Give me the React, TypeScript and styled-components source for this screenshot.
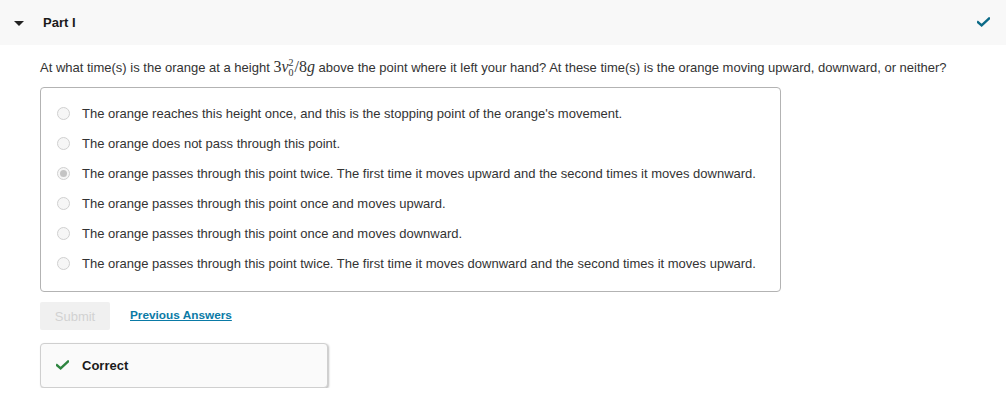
import React from 'react';
import styled, { createGlobalStyle } from 'styled-components';

const GlobalStyle = createGlobalStyle`
    body {
        margin: 0;
        background: #ffffff;
        font-family: "Liberation Sans", Arial, sans-serif;
        color: #333333;
    }
`;

const Header = styled.div`
    display: flex;
    align-items: center;
    height: 45px;
    background: #f8f8f8;
    padding: 0 16px 0 14px;
`;

const Caret = styled.span`
    width: 0;
    height: 0;
    border-left: 5px solid transparent;
    border-right: 5px solid transparent;
    border-top: 5px solid #222;
    margin-right: 19px;
    margin-top: 1px;
`;

const PartTitle = styled.span`
    flex: 1;
    font-weight: bold;
    font-size: 13px;
    color: #1a1a1a;
`;

const Body = styled.div`
    padding: 13px 40px 0;
    display: flex;
    flex-direction: column;
    align-items: flex-start;
`;

const Question = styled.p`
    margin: 0 0 11px;
    height: 18px;
    font-size: 13px;
    line-height: 18px;
    color: #333;
    white-space: nowrap;
`;

const MathSpan = styled.span`
    font-family: "Liberation Serif", "Times New Roman", serif;
    font-size: 16px;
    line-height: 0;
    white-space: nowrap;
`;

const Var = styled.i`
    font-style: italic;
`;

const SupSub = styled.span`
    display: inline-block;
    vertical-align: -4px;
    font-size: 10px;
    line-height: 10px;
    margin: 0 1px 0 0;

    & > span {
        display: block;
    }
`;

const ChoiceBox = styled.div`
    box-sizing: border-box;
    width: 741px;
    border: 1px solid #b3b3b3;
    border-radius: 4px;
    padding: 10px 0 13px 16px;
    display: flex;
    flex-direction: column;
`;

const ChoiceRow = styled.label`
    display: flex;
    align-items: center;
    height: 30px;
    font-size: 13px;
    color: #333;
`;

const Radio = styled.span<{ $checked?: boolean }>`
    box-sizing: border-box;
    width: 13px;
    height: 13px;
    border-radius: 50%;
    border: 1px solid #d0d0d0;
    background: #f6f6f6;
    margin: 0 12px 0 0;
    display: flex;
    align-items: center;
    justify-content: center;

    &::after {
        content: '';
        width: 7px;
        height: 7px;
        border-radius: 50%;
        background: ${p => (p.$checked ? '#c4c4c4' : 'transparent')};
    }
`;

const Actions = styled.div`
    display: flex;
    align-items: center;
    gap: 20px;
    margin-top: 10px;
`;

const SubmitButton = styled.button`
    width: 70px;
    height: 28px;
    border: none;
    border-radius: 2px;
    background: #f0f0f0;
    color: #d2d2d2;
    font-family: "Liberation Sans", Arial, sans-serif;
    font-size: 13px;
    padding: 0;
`;

const PrevLink = styled.a`
    font-size: 11.8px;
    font-weight: bold;
    color: #0a7aa6;
    text-decoration: underline;
    margin-top: -2px;
`;

const FeedbackBox = styled.div`
    box-sizing: border-box;
    width: 288px;
    height: 45px;
    margin-top: 13px;
    border: 1px solid #cfcfcf;
    border-radius: 4px;
    background: #fafafa;
    box-shadow: 1px 1px 2px rgba(0, 0, 0, 0.25);
    display: flex;
    align-items: center;
    padding-left: 15px;
    gap: 13px;
`;

const FeedbackText = styled.span`
    font-weight: bold;
    font-size: 13px;
    color: #1a1a1a;
`;

const Check = ({ color, width }: { color: string; width: number }) => (
    <svg width={width} height={width * 0.8} viewBox="0 0 14 11">
        <path d="M1 5.5 L5 9 L13 1.5" fill="none" stroke={color} strokeWidth={2.6} strokeLinecap="square" />
    </svg>
);

const choices = [
    "The orange reaches this height once, and this is the stopping point of the orange's movement.",
    'The orange does not pass through this point.',
    'The orange passes through this point twice. The first time it moves upward and the second times it moves downward.',
    'The orange passes through this point once and moves upward.',
    'The orange passes through this point once and moves downward.',
    'The orange passes through this point twice. The first time it moves downward and the second times it moves upward.',
];

export default function App(): React.JSX.Element {
    return <>
        <GlobalStyle />
        <Header>
            <Caret />
            <PartTitle>Part I</PartTitle>
            <Check color="#0b6a87" width={13} />
        </Header>
        <Body>
            <Question>
                At what time(s) is the orange at a height{' '}
                <MathSpan>
                    3<Var>v</Var>
                    <SupSub><span>2</span><span>0</span></SupSub>
                    /8<Var>g</Var>
                </MathSpan>{' '}
                above the point where it left your hand? At these time(s) is the orange moving upward, downward, or neither?
            </Question>
            <ChoiceBox>
                {choices.map((c, i) =>
                    <ChoiceRow key={`choice-${i}`}>
                        <Radio $checked={i === 2} />
                        {c}
                    </ChoiceRow>
                )}
            </ChoiceBox>
            <Actions>
                <SubmitButton disabled>Submit</SubmitButton>
                <PrevLink href="#">Previous Answers</PrevLink>
            </Actions>
            <FeedbackBox>
                <Check color="#2e8540" width={13} />
                <FeedbackText>Correct</FeedbackText>
            </FeedbackBox>
        </Body>
    </>;
}
